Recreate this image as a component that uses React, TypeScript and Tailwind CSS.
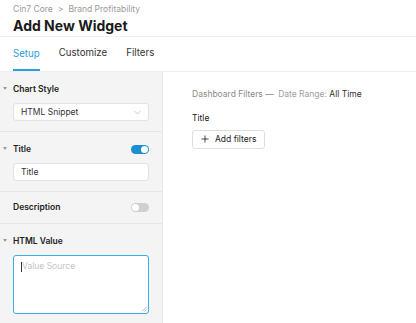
import React from 'react';

type SectionProps = {
  label: string;
  caret?: boolean;
  toggle?: 'on' | 'off';
  children?: React.ReactNode;
  compact?: boolean;
};

function Toggle({ on }: { on: boolean }) {
  return (
    <span
      className={`flex h-[9px] w-[18px] items-center rounded-full px-[1px] ${
        on ? 'justify-end bg-[#1b8fd0]' : 'justify-start bg-[#cfcfcf]'
      }`}
    >
      <span className="h-[7px] w-[7px] rounded-full bg-white" />
    </span>
  );
}

function Section({ label, caret = true, toggle, children, compact }: SectionProps) {
  return (
    <div className={`border-b border-[#e6e6e6] px-[13px] ${compact ? 'pt-[8px] pb-[9px]' : 'pt-[10px] pb-[10px]'}`}>
      <div className="relative flex h-[14px] items-center justify-between">
        {caret && (
          <span className="absolute -left-[10px] top-[5px] h-0 w-0 border-x-[2.5px] border-t-[3px] border-x-transparent border-t-[#999]" />
        )}
        <span className="text-[8.5px] font-semibold text-[#222]">{label}</span>
        {toggle && <Toggle on={toggle === 'on'} />}
      </div>
      {children && <div className="mt-[7px]">{children}</div>}
    </div>
  );
}

export default function App() {
  return (
    <div className="h-[323px] w-[416px] overflow-hidden bg-white font-['Inter',sans-serif] text-[#222]">
      {/* Header */}
      <div className="h-[37px] border-b border-[#efefef] px-[13px] pt-[3px]">
        <div className="flex items-center gap-[5px] text-[8.5px] text-[#9a9a9a]">
          <span>Cin7 Core</span>
          <span>&gt;</span>
          <span>Brand Profitability</span>
        </div>
        <div className="mt-[1px] text-[14px] font-bold leading-[18px] text-[#1a1a1a]">Add New Widget</div>
      </div>

      {/* Tabs */}
      <div className="flex h-[35px] gap-[19px] border-b border-[#efefef] px-[13px] text-[9.7px]">
        <div className="flex items-center border-b-2 border-[#2aa0dc] pt-[2px] text-[#2aa0dc]">Setup</div>
        <div className="flex items-center pb-[2px] text-[#333]">Customize</div>
        <div className="flex items-center pb-[2px] text-[#333]">Filters</div>
      </div>

      {/* Body */}
      <div className="flex h-[252px]">
        <div className="w-[163px] shrink-0 border-r border-[#e8e8e8] bg-[#f4f4f4]">
          <Section label="Chart Style">
            <div className="flex h-[18px] items-center justify-between rounded-[3px] border border-[#e2e2e2] bg-white px-[7px] text-[8.5px] text-[#333]">
              <span>HTML Snippet</span>
              <svg width="7" height="5" viewBox="0 0 7 5" fill="none">
                <path d="M0.5 1l3 3 3-3" stroke="#bbb" strokeWidth="0.8" />
              </svg>
            </div>
          </Section>
          <Section label="Title" toggle="on">
            <div className="flex h-[18px] items-center rounded-[3px] border border-[#e2e2e2] bg-white px-[7px] text-[8.5px] text-[#333]">
              Title
            </div>
          </Section>
          <Section label="Description" caret={false} toggle="off" compact />
          <Section label="HTML Value">
            <div className="relative h-[59px] rounded-[3px] border border-[#3aaedf] bg-white px-[7px] pt-[4px] text-[8.5px]">
              <span className="inline-block h-[10px] w-px bg-[#333] align-middle" />
              <span className="align-middle text-[#c4c4c4]">Value Source</span>
              <svg className="absolute bottom-[1px] right-[1px]" width="6" height="6" viewBox="0 0 6 6">
                <path d="M5.5 1L1 5.5M5.5 3.5L3.5 5.5" stroke="#999" strokeWidth="0.7" />
              </svg>
            </div>
          </Section>
        </div>

        <div className="flex-1 pl-[29px] pt-[16px]">
          <div className="text-[8.5px] text-[#8a8a8a]">
            Dashboard Filters — <span className="ml-[2px] text-[#a0a0a0]">Date Range:</span>{' '}
            <span className="text-[#333]">All Time</span>
          </div>
          <div className="mt-[11px] text-[8.5px] text-[#222]">Title</div>
          <div className="mt-[5px] inline-flex h-[19px] items-center gap-[6px] rounded-[3px] border border-[#dedede] bg-white px-[8px] text-[8.5px] text-[#222]">
            <svg width="8" height="8" viewBox="0 0 8 8">
              <path d="M4 0.5v7M0.5 4h7" stroke="#333" strokeWidth="0.9" />
            </svg>
            <span>Add filters</span>
          </div>
        </div>
      </div>
    </div>
  );
}
